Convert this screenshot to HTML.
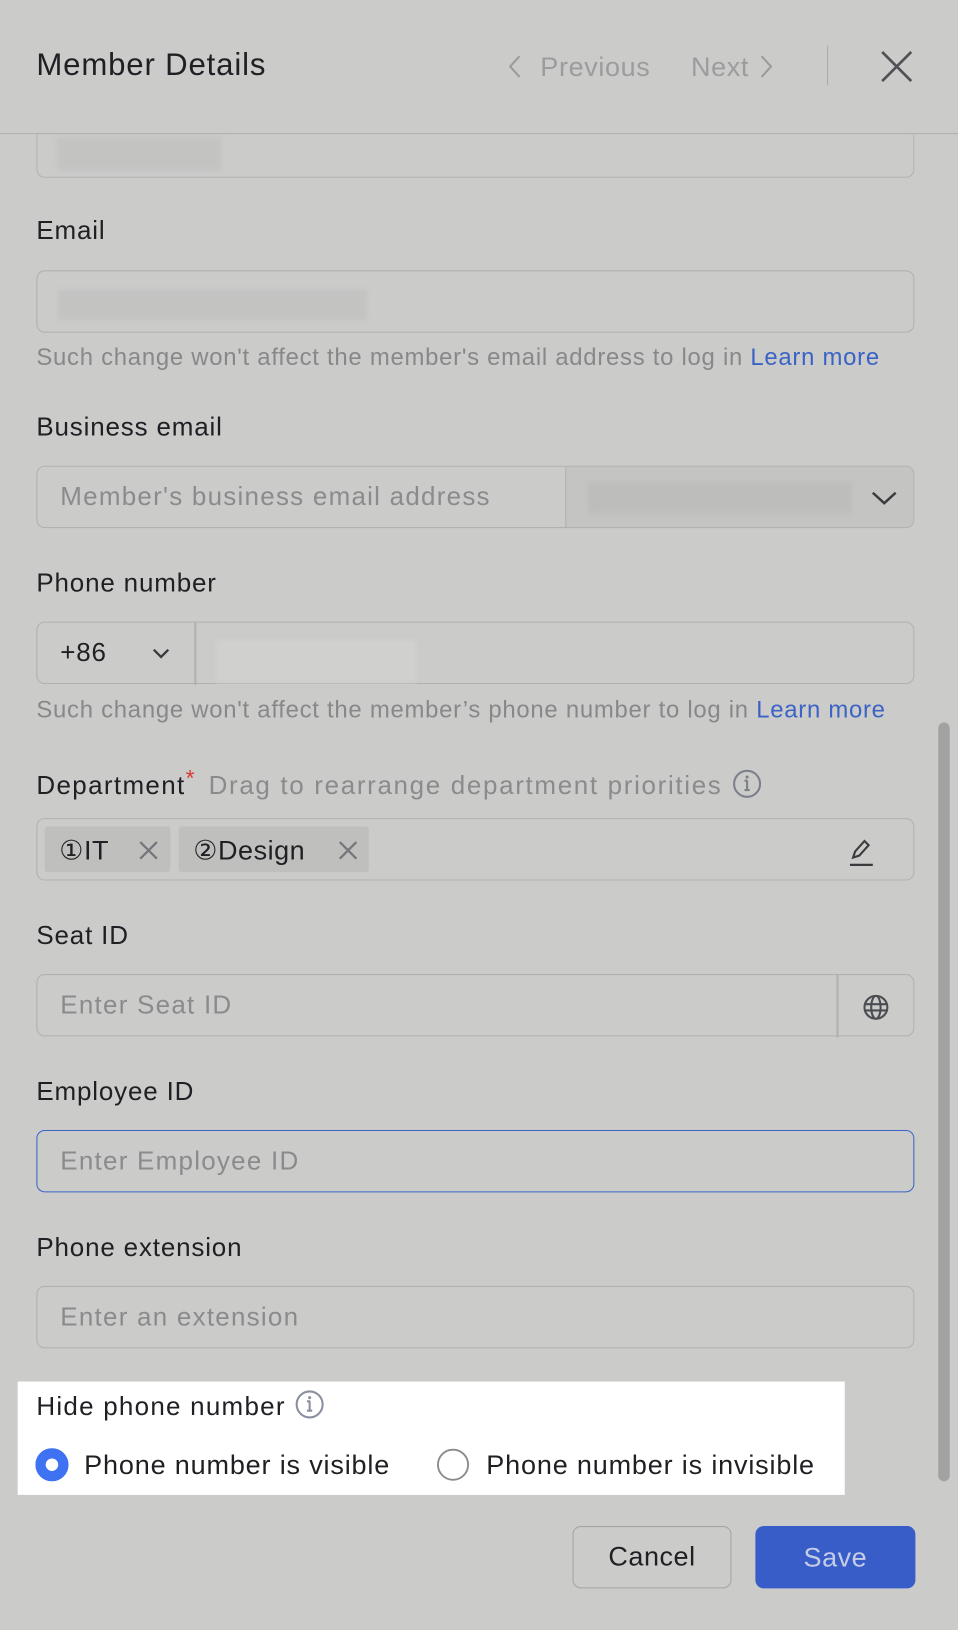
<!DOCTYPE html>
<html><head><meta charset="utf-8"><style>
html,body{margin:0;padding:0;width:958px;height:1630px;overflow:hidden;background:#cbcbca;}
#w{position:absolute;left:0;top:0;width:922px;height:1568px;transform:scale(1.03905,1.03954);transform-origin:0 0;font-family:"Liberation Sans",sans-serif;color:#1f2023;background:#cbcbca;}
.a{position:absolute;}
.lbl{position:absolute;left:35px;font-size:25px;letter-spacing:0.8px;line-height:28px;white-space:nowrap;}
.inp{position:absolute;left:35px;width:845px;height:60px;border:1.5px solid #b1b1b1;border-radius:8px;box-sizing:border-box;}
.ph{position:absolute;left:22px;top:15px;font-size:25px;letter-spacing:1.2px;color:#8a8b8d;white-space:nowrap;}
.help{position:absolute;left:35px;font-size:23px;letter-spacing:0.7px;color:#87888a;white-space:nowrap;}
.help b{font-weight:normal;color:#3b63c6;}
.blur{position:absolute;background:#c3c3c2;filter:blur(2px);}
.ic{display:inline-block;vertical-align:-5px;}
</style></head><body><div id="w">
<div class="a" style="left:0;top:0;width:922px;height:128px;border-bottom:1.5px solid #b0b0b0;"></div>
<div class="a" style="left:35px;top:46px;font-size:30px;letter-spacing:0.8px;">Member Details</div>
<svg class="a" style="left:488px;top:52px" width="16" height="24"><path d="M12 2L3 12l9 10" fill="none" stroke="#9b9b9b" stroke-width="2"/></svg>
<div class="a" style="left:520px;top:49px;font-size:26px;letter-spacing:0.6px;color:#9b9c9e;">Previous</div>
<div class="a" style="left:665px;top:49px;font-size:26px;letter-spacing:0.6px;color:#9b9c9e;">Next</div>
<svg class="a" style="left:729px;top:52px" width="16" height="24"><path d="M4 2l9 10-9 10" fill="none" stroke="#9b9b9b" stroke-width="2"/></svg>
<div class="a" style="left:796px;top:44px;width:1px;height:38px;background:#a9a9a9;"></div>
<svg class="a" style="left:846px;top:47px" width="34" height="34"><path d="M3 3L31 31M31 3L3 31" stroke="#4f5155" stroke-width="2.6"/></svg>

<div class="inp" style="border-top:none;border-radius:0 0 8px 8px;top:129px;height:42px;"></div>
<div class="blur" style="left:55px;top:132px;width:158px;height:32px;"></div>

<div class="lbl" style="top:208px;">Email</div>
<div class="inp" style="top:260px;"></div>
<div class="blur" style="left:56px;top:279px;width:297px;height:29px;"></div>
<div class="help" style="top:330px;">Such change won't affect the member's email address to log in <b>Learn more</b></div>

<div class="lbl" style="top:397px;">Business email</div>
<div class="inp" style="top:448px;overflow:hidden;"><div class="ph">Member's business email address</div>
<div class="a" style="left:508px;top:0;width:340px;height:60px;background:#c4c4c3;border-left:1.5px solid #b1b1b1;"></div></div>
<div class="blur" style="left:566px;top:464px;width:254px;height:30px;background:#bdbdbc;"></div>
<svg class="a" style="left:838px;top:471px" width="26" height="16"><path d="M2 3l11 10 11-10" fill="none" stroke="#3a3b3e" stroke-width="2.4"/></svg>

<div class="lbl" style="top:547px;">Phone number</div>
<div class="inp" style="top:598px;"><div class="a" style="left:22px;top:15px;font-size:25px;letter-spacing:0.8px;">+86</div>
<svg class="a" style="left:110px;top:24px" width="18" height="12"><path d="M2 2l7 7 7-7" fill="none" stroke="#3a3b3e" stroke-width="2.2"/></svg>
<div class="a" style="left:151px;top:0;width:1.5px;height:60px;background:#b1b1b1;"></div></div>
<div class="blur" style="left:208px;top:616px;width:193px;height:41px;background:#d0d0cf;"></div>
<div class="help" style="top:669px;">Such change won't affect the member’s phone number to log in <b>Learn more</b></div>

<div class="lbl" style="top:735px;letter-spacing:1.3px;">Department<span style="color:#d83b30;font-size:22px;vertical-align:8px;">*</span> <span style="color:#8a8b8d;margin-left:4px;letter-spacing:1.6px;">Drag to rearrange department priorities</span> <svg class="ic" width="30" height="30"><circle cx="15" cy="15" r="12.5" fill="none" stroke="#7c8089" stroke-width="2"/><path d="M15 12v9M12.5 21h5M12.5 12h3" stroke="#7c8089" stroke-width="2"/><circle cx="15" cy="8.5" r="1.5" fill="#7c8089"/></svg></div>
<div class="inp" style="top:787px;"></div>
<div class="a" style="left:43px;top:795px;width:121px;height:44px;background:#bfbfbe;border-radius:3px;"></div>
<div class="a" style="left:172px;top:795px;width:183px;height:44px;background:#bfbfbe;border-radius:3px;"></div>
<div class="a" style="left:57px;top:803px;font-size:26px;letter-spacing:0.5px;">①IT</div>
<div class="a" style="left:186px;top:803px;font-size:26px;letter-spacing:0.5px;">②Design</div>
<svg class="a" style="left:133px;top:808px" width="20" height="20"><path d="M2 2l16 16M18 2L2 18" stroke="#75777c" stroke-width="2.2"/></svg>
<svg class="a" style="left:325px;top:808px" width="20" height="20"><path d="M2 2l16 16M18 2L2 18" stroke="#75777c" stroke-width="2.2"/></svg>
<svg class="a" style="left:815px;top:804px" width="28" height="30"><path d="M6 21l2-6L17 5l4 4-9 10z" fill="none" stroke="#3a3b3e" stroke-width="2"/><path d="M3 28h22" stroke="#3a3b3e" stroke-width="2.2"/></svg>

<div class="lbl" style="top:886px;">Seat ID</div>
<div class="inp" style="top:937px;"><div class="ph">Enter Seat ID</div><div class="a" style="left:769px;top:0;width:1.5px;height:60px;background:#b1b1b1;"></div></div>
<svg class="a" style="left:830px;top:956px" width="26" height="26"><circle cx="13" cy="13" r="11" fill="none" stroke="#4a4c50" stroke-width="2"/><ellipse cx="13" cy="13" rx="4.5" ry="11" fill="none" stroke="#4a4c50" stroke-width="2"/><path d="M2 10h22M2 16h22" stroke="#4a4c50" stroke-width="2"/></svg>

<div class="lbl" style="top:1036px;">Employee ID</div>
<div class="inp" style="top:1087px;border-color:#3b63c6;"><div class="ph">Enter Employee ID</div></div>

<div class="lbl" style="top:1186px;">Phone extension</div>
<div class="inp" style="top:1237px;"><div class="ph">Enter an extension</div></div>

<div class="a" style="left:17px;top:1329px;width:796px;height:109px;background:#fff;"></div>
<div class="lbl" style="top:1336px;letter-spacing:1.2px;">Hide phone number <svg class="ic" width="30" height="30"><circle cx="15" cy="15" r="12.5" fill="none" stroke="#8a8fa0" stroke-width="2"/><path d="M15 12v9M12.5 21h5M12.5 12h3" stroke="#8a8fa0" stroke-width="2"/><circle cx="15" cy="8.5" r="1.5" fill="#8a8fa0"/></svg></div>
<svg class="a" style="left:34px;top:1393px" width="32" height="32"><circle cx="16" cy="16" r="16" fill="#3e72f2"/><circle cx="16" cy="16" r="6" fill="#fff"/></svg>
<div class="a" style="left:81px;top:1394px;font-size:26px;letter-spacing:0.8px;">Phone number is visible</div>
<svg class="a" style="left:420px;top:1393px" width="32" height="32"><circle cx="16" cy="16" r="14.5" fill="none" stroke="#8a8b8d" stroke-width="1.8"/></svg>
<div class="a" style="left:468px;top:1394px;font-size:26px;letter-spacing:0.8px;">Phone number is invisible</div>

<div class="a" style="left:903px;top:695px;width:11px;height:730px;background:#a2a2a2;border-radius:6px;"></div>

<div class="a" style="left:551px;top:1468px;width:153px;height:60px;box-sizing:border-box;border:1.5px solid #a4a4a4;border-radius:8px;text-align:center;line-height:57px;font-size:26px;letter-spacing:0.5px;">Cancel</div>
<div class="a" style="left:727px;top:1468px;width:154px;height:60px;background:#385dc9;border-radius:8px;text-align:center;line-height:60px;font-size:26px;letter-spacing:0.5px;color:#c5cde6;">Save</div>
</div></body></html>
